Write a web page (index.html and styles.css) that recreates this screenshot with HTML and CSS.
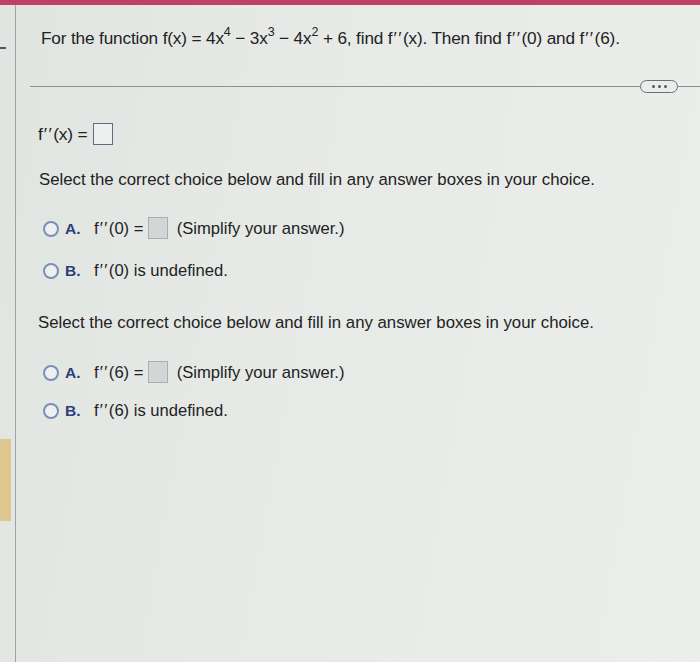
FILE: index.html
```html
<!DOCTYPE html>
<html>
<head>
<meta charset="utf-8">
<link rel="stylesheet" href="styles.css">
</head>
<body>
<div class="topbar"></div>
<div class="page">
  <div class="rail">
    <div class="dash"></div>
    <div class="mark"></div>
  </div>
  <div class="content">
    <div class="question">For the function f(x) = 4x<sup>4</sup> − 3x<sup>3</sup> − 4x<sup>2</sup> + 6, find f<span class="pr">′′</span>(x). Then find f<span class="pr">′′</span>(0) and f<span class="pr">′′</span>(6).</div>
    <div class="sep">
      <div class="line"></div>
      <div class="more"><span></span><span></span><span></span></div>
      <div class="line short"></div>
    </div>
    <div class="answer">f<span class="pr">′′</span>(x) = <span class="box white"></span></div>
    <div class="prompt">Select the correct choice below and fill in any answer boxes in your choice.</div>
    <div class="choices first">
      <div class="choice"><span class="radio"></span><span class="letter">A.</span><span class="expr">f<span class="pr">′′</span>(0) = <span class="box grey"></span> (Simplify your answer.)</span></div>
      <div class="choice"><span class="radio"></span><span class="letter">B.</span><span class="expr">f<span class="pr">′′</span>(0) is undefined.</span></div>
    </div>
    <div class="prompt second">Select the correct choice below and fill in any answer boxes in your choice.</div>
    <div class="choices second">
      <div class="choice"><span class="radio"></span><span class="letter">A.</span><span class="expr">f<span class="pr">′′</span>(6) = <span class="box grey"></span> (Simplify your answer.)</span></div>
      <div class="choice"><span class="radio"></span><span class="letter">B.</span><span class="expr">f<span class="pr">′′</span>(6) is undefined.</span></div>
    </div>
  </div>
</div>
</body>
</html>
```
FILE: styles.css
```css
html, body {
  margin: 0;
  padding: 0;
}
body {
  width: 700px;
  height: 662px;
  overflow: hidden;
  background: linear-gradient(100deg, #e1e5e2 0%, #e7eae7 45%, #eceeeb 100%);
  font-family: "Liberation Sans", Arial, sans-serif;
  color: #222;
}
.topbar {
  height: 5px;
  background: #bf4167;
}
.page {
  display: flex;
  height: 657px;
}
.rail {
  width: 15px;
  flex: none;
  border-right: 1px solid #9ea3a3;
  position: relative;
}
.dash {
  position: absolute;
  left: 0;
  top: 42px;
  width: 6px;
  height: 2px;
  background: #555;
}
.mark {
  position: absolute;
  left: 0;
  top: 434px;
  width: 11px;
  height: 82px;
  background: #ddc78f;
}
.content {
  flex: 1;
  padding-left: 22px;
}
.pr {
  letter-spacing: 1.5px;
  margin-left: 1px;
}
.question {
  font-size: 17.2px;
  padding-top: 23px;
  padding-left: 3px;
  line-height: 20px;
  letter-spacing: -0.15px;
  white-space: nowrap;
}
.question sup {
  font-size: 12.5px;
  line-height: 0;
  vertical-align: 8px;
}
.sep {
  display: flex;
  align-items: center;
  height: 14px;
  margin-top: 31px;
  margin-left: -8px;
}
.line {
  height: 1px;
  background: #8a8f90;
  flex: 1;
}
.line.short {
  flex: none;
  width: 22px;
}
.more {
  width: 36px;
  height: 11px;
  border: 1.5px solid #6b7070;
  border-radius: 8px;
  display: flex;
  align-items: center;
  justify-content: center;
  gap: 3px;
}
.more span {
  width: 3px;
  height: 3px;
  background: #555a5a;
  border-radius: 50%;
}
.answer {
  margin-top: 29px;
  height: 24px;
  line-height: 24px;
  font-size: 17.4px;
  letter-spacing: -0.2px;
}
.box {
  display: inline-block;
  width: 20px;
  height: 22px;
  box-sizing: border-box;
  vertical-align: middle;
  margin-top: -3px;
}
.box.white {
  border: 1.5px solid #5f6d80;
  background: #eef0ef;
  margin-left: 1px;
}
.box.grey {
  border: 1px solid #a9b0b4;
  background: #d3d6d6;
  margin-left: 0;
  margin-right: 4px;
}
.prompt {
  margin-top: 24px;
  font-size: 16.8px;
  line-height: 20px;
  padding-left: 1px;
}
.prompt.second {
  margin-top: 31px;
  padding-left: 0;
}
.choices {
  margin-top: 28px;
  display: flex;
  flex-direction: column;
  gap: 20px;
  padding-left: 5px;
}
.choices.second {
  margin-top: 29px;
  gap: 16px;
}
.choice {
  display: flex;
  align-items: center;
  font-size: 16.6px;
  height: 22px;
}
.choice .pr {
  letter-spacing: 1.5px;
}
.radio {
  width: 12px;
  height: 12px;
  border: 2px solid #7990b3;
  border-radius: 50%;
  background: #eef0ef;
  flex: none;
}
.letter {
  font-weight: bold;
  color: #2b3c78;
  margin-left: 6px;
  width: 29px;
  font-size: 15.5px;
}
.expr {
  white-space: pre;
  line-height: 22px;
}
```
